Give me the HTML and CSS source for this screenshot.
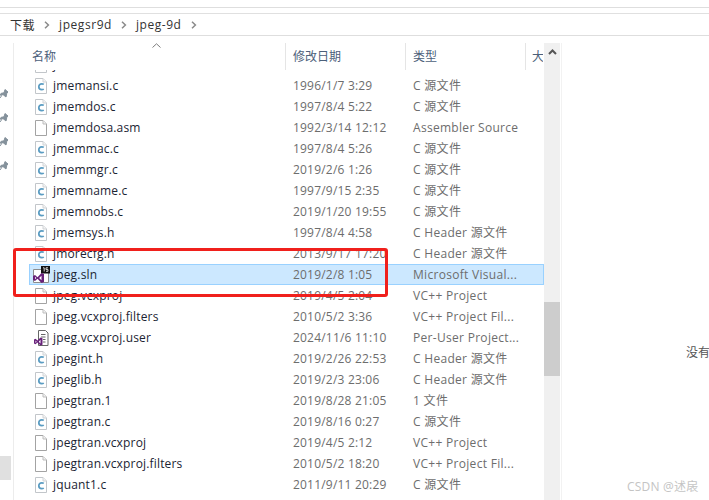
FILE: index.html
```html
<!DOCTYPE html>
<html lang="zh">
<head>
<meta charset="utf-8">
<title>jpeg-9d</title>
<link rel="stylesheet" href="styles.css">
</head>
<body>
<svg class="defs" width="0" height="0" aria-hidden="true">
  <symbol id="page" viewBox="0 0 12 16">
    <path d="M.5.5h7.500l3.500 3.500v11.500h-11z" fill="#fff" stroke="#a3a3a3"/>
    <path d="M8 .5v3.500h3.500" fill="#f2f2f2" stroke="#bdbdbd"/>
  </symbol>
  <symbol id="cfile" viewBox="0 0 12 16">
    <path d="M.5.5h7.500l3.500 3.500v11.500h-11z" fill="#fff" stroke="#c2c6ca"/>
    <path d="M8 .5v3.500h3.500" fill="#f4f4f4" stroke="#d0d3d6"/>
    <path d="M8.800 6.400c-.7-.5-1.300-.6-2-.6-1.800 0-3 1.200-3 3 0 1.700 1.200 2.900 3 2.900.7 0 1.400-.2 2-.6" fill="none" stroke="#5a9cc2" stroke-width="1.700"/>
  </symbol>
  <symbol id="pin" viewBox="0 0 8 11">
    <path d="M5 .5L8 3 6.800 4.400 6 8 2.800 5.400 0 6.200 1 4.400 4 3.800zM2.500 5.500L0 9" fill="#84919b" stroke="#84919b" stroke-width="1"/>
  </symbol>
</svg>

<nav class="topbar">
  <div class="strip"></div>
  <div class="crumbs">
    <span class="crumb">下载</span>
    <svg class="chev" viewBox="0 0 6 8"><path d="M1 .8L4.400 4 1 7.200" fill="none" stroke="#8a8a8a" stroke-width="1.500"/></svg>
    <span class="crumb">jpegsr9d</span>
    <svg class="chev" viewBox="0 0 6 8"><path d="M1 .8L4.400 4 1 7.200" fill="none" stroke="#8a8a8a" stroke-width="1.500"/></svg>
    <span class="crumb">jpeg-9d</span>
    <svg class="chev" viewBox="0 0 6 8"><path d="M1 .8L4.400 4 1 7.200" fill="none" stroke="#8a8a8a" stroke-width="1.500"/></svg>
  </div>
</nav>

<main class="pane">
  <aside class="sidebar">
    <div class="pins">
      <svg class="pin"><use href="#pin"/></svg>
      <svg class="pin"><use href="#pin"/></svg>
      <svg class="pin"><use href="#pin"/></svg>
      <svg class="pin"><use href="#pin"/></svg>
    </div>
    <div class="side-sel"></div>
  </aside>

  <section class="list">
    <header class="head">
      <div class="hcell">名称<svg class="sort" viewBox="0 0 9 5"><path d="M.5 4.500L4.500 .8l4 3.700" fill="none" stroke="#7d7d7d"/></svg></div>
      <div class="hcell">修改日期</div>
      <div class="hcell">类型</div>
      <div class="hcell last">大</div>
    </header>
    <div class="rows">
      <div class="row partial"><span class="name"><svg class="ico"><use href="#cfile"/></svg>jinclude.h</span><span>1994/4/1 2:13</span><span>C Header 源文件</span></div>
      <div class="row"><span class="name"><svg class="ico"><use href="#cfile"/></svg>jmemansi.c</span><span>1996/1/7 3:29</span><span>C 源文件</span></div>
      <div class="row"><span class="name"><svg class="ico"><use href="#cfile"/></svg>jmemdos.c</span><span>1997/8/4 5:22</span><span>C 源文件</span></div>
      <div class="row"><span class="name"><svg class="ico"><use href="#page"/></svg>jmemdosa.asm</span><span>1992/3/14 12:12</span><span>Assembler Source</span></div>
      <div class="row"><span class="name"><svg class="ico"><use href="#cfile"/></svg>jmemmac.c</span><span>1997/8/4 5:26</span><span>C 源文件</span></div>
      <div class="row"><span class="name"><svg class="ico"><use href="#cfile"/></svg>jmemmgr.c</span><span>2019/2/6 1:26</span><span>C 源文件</span></div>
      <div class="row"><span class="name"><svg class="ico"><use href="#cfile"/></svg>jmemname.c</span><span>1997/9/15 2:35</span><span>C 源文件</span></div>
      <div class="row"><span class="name"><svg class="ico"><use href="#cfile"/></svg>jmemnobs.c</span><span>2019/1/20 19:55</span><span>C 源文件</span></div>
      <div class="row"><span class="name"><svg class="ico"><use href="#cfile"/></svg>jmemsys.h</span><span>1997/8/4 4:58</span><span>C Header 源文件</span></div>
      <div class="row"><span class="name"><svg class="ico"><use href="#cfile"/></svg>jmorecfg.h</span><span>2013/9/17 17:20</span><span>C Header 源文件</span></div>
      <div class="row selected"><span class="name"><svg class="ico vs" viewBox="0 0 18 18"><path d="M1.500 3.500h15v13h-15z" fill="#fff" stroke="#8c8c8c"/><rect x="9" y="0" width="9" height="7.500" fill="#111"/><path d="M11 1.800h1.200v3.700M14 5.300h2V3.600h-2V1.800h2" fill="none" stroke="#fff" stroke-width=".8"/><path d="M1 10l2-1 2.500 2.300L9.500 7 12 8v8l-2.500 1-4-4.300L3 15l-2-1zM3 10.800v2.400l1.300-1.200zM9.500 9.700L7.100 12l2.400 2.300z" fill="#68217a" fill-rule="evenodd"/></svg>jpeg.sln</span><span>2019/2/8 1:05</span><span>Microsoft Visual...</span></div>
      <div class="row"><span class="name"><svg class="ico"><use href="#page"/></svg>jpeg.vcxproj</span><span>2019/4/5 2:04</span><span>VC++ Project</span></div>
      <div class="row"><span class="name"><svg class="ico"><use href="#page"/></svg>jpeg.vcxproj.filters</span><span>2010/5/2 3:36</span><span>VC++ Project Fil...</span></div>
      <div class="row"><span class="name"><svg class="ico vs" viewBox="0 0 18 18"><path d="M6.500 1.500h7l2.500 2.500v12.500h-9.500z" fill="#fff" stroke="#666"/><path d="M9 5.500h4.500M9 8h4.500M11 10.500h2.500M11 13h2.500" stroke="#666"/><path d="M2 10.500l1.500-.8 2 1.800 3-3 2 .8v6.400l-2 .8-3-3-2 1.800-1.500-.8zM3.500 11.500v2.400l1.200-1.200zM8.500 10.800l-1.800 1.900 1.800 1.900z" fill="#68217a" fill-rule="evenodd"/></svg>jpeg.vcxproj.user</span><span>2024/11/6 11:10</span><span>Per-User Project...</span></div>
      <div class="row"><span class="name"><svg class="ico"><use href="#cfile"/></svg>jpegint.h</span><span>2019/2/26 22:53</span><span>C Header 源文件</span></div>
      <div class="row"><span class="name"><svg class="ico"><use href="#cfile"/></svg>jpeglib.h</span><span>2019/2/3 23:06</span><span>C Header 源文件</span></div>
      <div class="row"><span class="name"><svg class="ico"><use href="#page"/></svg>jpegtran.1</span><span>2019/8/28 21:05</span><span>1 文件</span></div>
      <div class="row"><span class="name"><svg class="ico"><use href="#cfile"/></svg>jpegtran.c</span><span>2019/8/16 0:27</span><span>C 源文件</span></div>
      <div class="row"><span class="name"><svg class="ico"><use href="#page"/></svg>jpegtran.vcxproj</span><span>2019/4/5 2:12</span><span>VC++ Project</span></div>
      <div class="row"><span class="name"><svg class="ico"><use href="#page"/></svg>jpegtran.vcxproj.filters</span><span>2010/5/2 18:20</span><span>VC++ Project Fil...</span></div>
      <div class="row"><span class="name"><svg class="ico"><use href="#cfile"/></svg>jquant1.c</span><span>2011/9/11 20:29</span><span>C 源文件</span></div>
    </div>
  </section>

  <div class="scrollbar">
    <svg class="up" viewBox="0 0 9 6"><path d="M1 5l3.500-3.500L8 5" fill="none" stroke="#555" stroke-width="2"/></svg>
    <div class="thumb"></div>
  </div>

  <aside class="preview">没有</aside>
</main>

<div class="annotation"></div>
<div class="watermark">CSDN @述扆</div>
</body>
</html>
```

FILE: styles.css
```css
* { box-sizing: border-box; }
html, body { margin: 0; height: 100%; }
body {
  width: 709px;
  height: 500px;
  overflow: hidden;
  position: relative;
  background: #fff;
  font-family: "Open Sans", "Noto Sans CJK SC", sans-serif;
  font-size: 12px;
  display: flex;
  flex-direction: column;
}
.defs { position: absolute; }

.topbar { height: 36px; flex: none; padding-top: 7px; }
.strip { height: 6px; border-top: 1px solid #dedede; }
.crumbs {
  height: 23px;
  border-top: 1px solid #e0e0e0;
  border-bottom: 1px solid #dedede;
  display: flex;
  align-items: center;
  padding-left: 10px;
  color: #333;
  letter-spacing: .55px;
}
.crumb { margin-right: 9px; }
.chev { width: 6px; height: 8px; margin-right: 9px; }

.pane { flex: 1; display: flex; min-height: 0; padding-top: 7px; }
.sidebar {
  width: 14px;
  flex: none;
  border-right: 1px solid #ececec;
  display: flex;
  flex-direction: column;
  overflow: hidden;
}
.pins { display: flex; flex-direction: column; gap: 13px; padding-top: 46px; }
.pin { width: 8px; height: 11px; display: block; }
.side-sel { width: 11px; height: 24px; margin-top: 284px; background: #e0e0e0; }

.list { width: 530px; flex: none; overflow: hidden; padding-left: 15px; }
.head {
  height: 27px;
  display: grid;
  grid-template-columns: 257px 120px 120px 17px;
  color: #4c607a;
}
.hcell {
  position: relative;
  padding: 5px 0 0 3px;
  line-height: 17px;
  border-right: 1px solid #e5e5e5;
  white-space: nowrap;
}
.hcell + .hcell { padding-left: 7px; }
.hcell.last { border-right: 0; overflow: hidden; padding-left: 6px; }
.sort { position: absolute; left: 123px; top: 0; width: 9px; height: 5px; }

.rows { height: 430px; overflow: hidden; }
.row {
  height: 21px;
  width: 515px;
  display: grid;
  grid-template-columns: 257px 120px 120px 18px;
  align-items: center;
  color: #6d6d6d;
  line-height: 19px;
  white-space: nowrap;
  letter-spacing: .2px;
}
.row > span { padding-left: 7px; }
.row > span:nth-child(3) { letter-spacing: .3px; }
.row > .name {
  display: flex;
  align-items: center;
  gap: 6px;
  padding-left: 6px;
  color: #1b2433;
  letter-spacing: .17px;
}
.row.partial { margin-top: -16px; }
.ico { width: 12px; height: 16px; flex: none; }
.ico.vs { width: 18px; height: 18px; margin-left: -3px; margin-right: -3px; }
.row.selected { background: #cce8ff; box-shadow: inset 0 0 0 1px #99d1ff; }

.scrollbar {
  width: 16px;
  flex: none;
  background: #f0f0f0;
  display: flex;
  flex-direction: column;
  align-items: center;
}
.up { width: 9px; height: 6px; margin-top: 6px; margin-bottom: 247px; }
.thumb { width: 100%; height: 74px; background: #cdcdcd; }

.preview {
  flex: 1;
  border-left: 1px solid #f2f2f2;
  margin-left: 1px;
  padding: 301px 0 0 124px;
  color: #555;
  white-space: nowrap;
  overflow: hidden;
  line-height: 17px;
}

.annotation {
  position: absolute;
  left: 13px;
  top: 248px;
  width: 375px;
  height: 49px;
  border: 3px solid #f0201c;
  border-radius: 3px;
}
.watermark {
  position: absolute;
  left: 627px;
  top: 478px;
  color: #c4c4c4;
  line-height: 18px;
  letter-spacing: .2px;
  white-space: nowrap;
}
```
